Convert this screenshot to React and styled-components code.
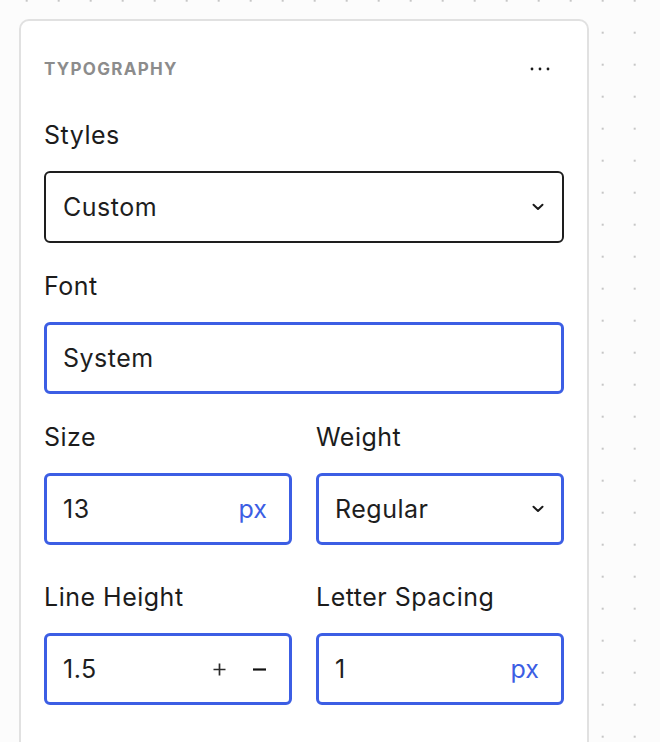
import React from 'react';
import styled, { createGlobalStyle } from 'styled-components';

const GlobalStyle = createGlobalStyle`
  html, body {
    margin: 0;
    padding: 0;
  }
  body {
    background-color: #fcfcfc;
    background-image: radial-gradient(circle, #c6c6c6 1px, transparent 1.4px);
    background-size: 32px 32px;
    background-position: 10.7px 16.7px;
    font-family: Inter, 'Noto Sans', sans-serif;
    color: #1c1c1c;
    overflow: hidden;
  }
`;

const Page = styled.div`
  padding: 19px;
  height: 742px;
  box-sizing: border-box;
`;

const Panel = styled.section`
  width: 570px;
  min-height: 800px;
  box-sizing: border-box;
  background: #ffffff;
  border: 2px solid #e1e1e1;
  border-radius: 10px;
  padding: 36px 23px;
`;

const Header = styled.div`
  display: flex;
  align-items: center;
  justify-content: space-between;
  height: 24px;
  margin-bottom: 38px;
`;

const Title = styled.h2`
  margin: 0;
  font-size: 17px;
  font-weight: 700;
  letter-spacing: 1.3px;
  color: #8c8c8c;
`;

const MoreButton = styled.button`
  display: flex;
  align-items: center;
  justify-content: center;
  width: 28px;
  height: 24px;
  margin-right: 10px;
  padding: 0;
  border: 0;
  background: none;
  color: #1a1a1a;
`;

const Stack = styled.div`
  display: flex;
  flex-direction: column;
  gap: 27px;
`;

const Grid = styled.div`
  display: grid;
  grid-template-columns: 1fr 1fr;
  column-gap: 24px;
  row-gap: 36px;
`;

const Field = styled.div`
  display: flex;
  flex-direction: column;
  gap: 20px;
`;

const Label = styled.label`
  font-size: 25px;
  line-height: 32px;
  letter-spacing: 0.5px;
  color: #1c1c1c;
`;

// select-like boxes keep the chevron closer to the edge than units/steppers
const Box = styled.div`
  display: flex;
  align-items: center;
  height: 72px;
  box-sizing: border-box;
  border: ${p => (p.$focus ? '3px solid #3c5ee4' : '2px solid #1e1e1e')};
  border-radius: 6px;
  padding-left: ${p => (p.$focus ? '16px' : '17px')};
  padding-right: ${p => (p.$select ? (p.$focus ? '17px' : '18px') : '22px')};
  background: #fff;
`;

const Value = styled.span`
  flex: 1;
  font-size: 25px;
  letter-spacing: 0.5px;
  color: #1e1e1e;
  white-space: nowrap;
`;

const Unit = styled.span`
  font-size: 25px;
  color: #3c5ee4;
`;

const Steppers = styled.div`
  display: flex;
  align-items: center;
  gap: 27px;
  margin-right: 1px;
`;

const Chevron = () => (
  <svg width="12" height="8" viewBox="0 0 12 8" fill="none">
    <path d="M1.5 1.8 L6 6 L10.5 1.8" stroke="#1a1a1a" strokeWidth="2" strokeLinecap="round" strokeLinejoin="round" />
  </svg>
);

const Dots = () => (
  <svg width="20" height="4" viewBox="0 0 20 4">
    <circle cx="2" cy="2" r="1.4" fill="#1a1a1a" />
    <circle cx="10" cy="2" r="1.4" fill="#1a1a1a" />
    <circle cx="18" cy="2" r="1.4" fill="#1a1a1a" />
  </svg>
);

const Plus = () => (
  <svg width="13" height="13" viewBox="0 0 13 13">
    <path d="M6.5 0.5 V12.5 M0.5 6.5 H12.5" stroke="#2a2a2a" strokeWidth="1.7" />
  </svg>
);

const Minus = () => (
  <svg width="13" height="13" viewBox="0 0 13 13">
    <path d="M0 6.5 H13" stroke="#111" strokeWidth="2.2" />
  </svg>
);

export default function App() {
  return (
    <>
      <GlobalStyle />
      <Page>
        <Panel>
          <Header>
            <Title>TYPOGRAPHY</Title>
            <MoreButton aria-label="More options">
              <Dots />
            </MoreButton>
          </Header>
          <Stack>
            <Field>
              <Label>Styles</Label>
              <Box $select>
                <Value>Custom</Value>
                <Chevron />
              </Box>
            </Field>
            <Field>
              <Label>Font</Label>
              <Box $focus>
                <Value>System</Value>
              </Box>
            </Field>
            <Grid>
              <Field>
                <Label>Size</Label>
                <Box $focus>
                  <Value>13</Value>
                  <Unit>px</Unit>
                </Box>
              </Field>
              <Field>
                <Label>Weight</Label>
                <Box $focus $select>
                  <Value>Regular</Value>
                  <Chevron />
                </Box>
              </Field>
              <Field>
                <Label>Line Height</Label>
                <Box $focus>
                  <Value>1.5</Value>
                  <Steppers>
                    <Plus />
                    <Minus />
                  </Steppers>
                </Box>
              </Field>
              <Field>
                <Label>Letter Spacing</Label>
                <Box $focus>
                  <Value>1</Value>
                  <Unit>px</Unit>
                </Box>
              </Field>
            </Grid>
          </Stack>
        </Panel>
      </Page>
    </>
  );
}
